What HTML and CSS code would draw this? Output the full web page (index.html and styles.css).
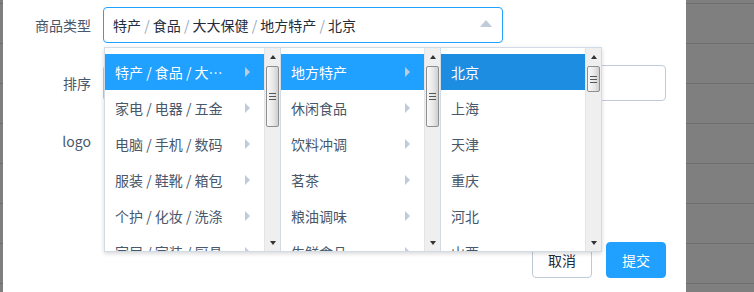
FILE: index.html
```html
<!DOCTYPE html>
<html lang="zh-CN">
<head>
<meta charset="UTF-8">
<meta name="viewport" content="width=device-width, initial-scale=1.0">
<title>编辑商品</title>
<link rel="stylesheet" href="styles.css">
</head>
<body>
<div class="dialog">
  <div class="dialog-body">
    <form class="form">
      <!-- 商品类型 -->
      <div class="form-item">
        <label class="form-label">商品类型</label>
        <div class="form-content">
          <div class="cascader">
            <span class="cascader-label">特产 <i>/</i> 食品 <i>/</i> 大大保健 <i>/</i> 地方特产 <i>/</i> 北京</span>
            <span class="cascader-caret"></span>
          </div>
          <!-- 级联菜单 -->
          <div class="cascader-menus">
            <div class="menu menu-first">
              <ul class="menu-list">
                <li class="menu-item active"><span class="item-text">特产 / 食品 / 大大保健</span><span class="item-arrow"></span></li>
                <li class="menu-item"><span class="item-text">家电 / 电器 / 五金</span><span class="item-arrow"></span></li>
                <li class="menu-item"><span class="item-text">电脑 / 手机 / 数码</span><span class="item-arrow"></span></li>
                <li class="menu-item"><span class="item-text">服装 / 鞋靴 / 箱包</span><span class="item-arrow"></span></li>
                <li class="menu-item"><span class="item-text">个护 / 化妆 / 洗涤</span><span class="item-arrow"></span></li>
                <li class="menu-item"><span class="item-text">家居 / 家装 / 厨具</span><span class="item-arrow"></span></li>
              </ul>
              <div class="scrollbar">
                <span class="sb-up"></span>
                <span class="sb-thumb sb-thumb-tall"></span>
                <span class="sb-down"></span>
              </div>
            </div>
            <div class="menu">
              <ul class="menu-list">
                <li class="menu-item active"><span class="item-text">地方特产</span><span class="item-arrow"></span></li>
                <li class="menu-item"><span class="item-text">休闲食品</span><span class="item-arrow"></span></li>
                <li class="menu-item"><span class="item-text">饮料冲调</span><span class="item-arrow"></span></li>
                <li class="menu-item"><span class="item-text">茗茶</span><span class="item-arrow"></span></li>
                <li class="menu-item"><span class="item-text">粮油调味</span><span class="item-arrow"></span></li>
                <li class="menu-item"><span class="item-text">生鲜食品</span><span class="item-arrow"></span></li>
              </ul>
              <div class="scrollbar">
                <span class="sb-up"></span>
                <span class="sb-thumb sb-thumb-tall"></span>
                <span class="sb-down"></span>
              </div>
            </div>
            <div class="menu menu-last">
              <ul class="menu-list">
                <li class="menu-item hover"><span class="item-text">北京</span></li>
                <li class="menu-item"><span class="item-text">上海</span></li>
                <li class="menu-item"><span class="item-text">天津</span></li>
                <li class="menu-item"><span class="item-text">重庆</span></li>
                <li class="menu-item"><span class="item-text">河北</span></li>
                <li class="menu-item"><span class="item-text">山西</span></li>
              </ul>
              <div class="scrollbar">
                <span class="sb-up"></span>
                <span class="sb-thumb sb-thumb-short"></span>
                <span class="sb-down"></span>
              </div>
            </div>
          </div>
        </div>
      </div>
      <!-- 排序 -->
      <div class="form-item">
        <label class="form-label">排序</label>
        <div class="form-content">
          <input class="input" type="text">
        </div>
      </div>
      <!-- logo -->
      <div class="form-item">
        <label class="form-label">logo</label>
        <div class="form-content"></div>
      </div>
    </form>
  </div>
  <div class="dialog-footer">
    <button class="btn" type="button">取消</button>
    <button class="btn btn-primary" type="button">提交</button>
  </div>
</div>
</body>
</html>
```

FILE: styles.css
```css
/* 遮罩下的表格 */
body {
  margin: 0;
  padding-left: 3px;
  height: 100vh;
  overflow: hidden;
  background: repeating-linear-gradient(to bottom, #6e6e6e 0 1px, #7f7f7f 1px 40px);
  background-position: 0 3px;
  font-family: "Noto Sans CJK SC", "Noto Sans", sans-serif;
  font-size: 14px;
  color: #48576a;
}
.dialog {
  width: 683px;
  height: 100vh;
  background: #fff;
  display: flex;
  flex-direction: column;
}
.dialog-body {
  padding: 7px 20px 0;
}
.form {
  margin: 0;
}
.form-item {
  display: flex;
  margin-bottom: 22px;
}
.form-label {
  width: 80px;
  flex-shrink: 0;
  box-sizing: border-box;
  padding-right: 12px;
  text-align: right;
  line-height: 36px;
}
.form-content {
  flex: 1;
  height: 36px;
  position: relative;
}

/* 级联选择器 */
.cascader {
  width: 400px;
  height: 36px;
  box-sizing: border-box;
  border: 1px solid #20a0ff;
  border-radius: 4px;
  display: flex;
  align-items: center;
  padding: 0 10px 0 9px;
}
.cascader-label {
  flex: 1;
  color: #1f2d3d;
  line-height: 20px;
  white-space: nowrap;
}
.cascader-label i {
  font-style: normal;
  color: #97a8be;
}
.cascader-caret {
  width: 0;
  height: 0;
  border-left: 6.5px solid transparent;
  border-right: 6.5px solid transparent;
  border-bottom: 7px solid #bfcbd9;
  margin-top: -4px;
}
.input {
  display: block;
  width: 100%;
  height: 36px;
  box-sizing: border-box;
  border: 1px solid #bfcbd9;
  border-radius: 4px;
  margin: 0;
}

.cascader-menus {
  position: absolute;
  top: 40px;
  left: 1px;
  z-index: 10;
  display: flex;
  background: #fff;
  border: 1px solid #d1dbe5;
  box-shadow: 0 2px 4px rgba(0, 0, 0, .12), 0 0 6px rgba(0, 0, 0, .04);
}
.menu {
  display: flex;
  height: 203px;
  border-right: 1px solid #d1dbe5;
}
.menu-last {
  border-right: none;
}
.menu-list {
  list-style: none;
  margin: 0;
  padding: 6px 0;
  width: 143px;
  overflow: hidden;
}
.menu-first .menu-list {
  width: 159px;
}
.menu-last .menu-list {
  width: 144px;
}
.menu-item {
  display: flex;
  align-items: center;
  padding: 8px 14px 8px 10px;
  line-height: 20px;
  white-space: nowrap;
}
.item-text {
  flex: 1;
  min-width: 0;
  overflow: hidden;
  text-overflow: ellipsis;
  margin-right: 18px;
}
.item-arrow {
  width: 0;
  height: 0;
  border-top: 5px solid transparent;
  border-bottom: 5px solid transparent;
  border-left: 5px solid #bfcbd9;
}
.menu-item.active {
  background: #20a0ff;
  color: #fff;
}
.menu-item.hover {
  background: #1c8de0;
  color: #fff;
}

/* 旧式滚动条 */
.scrollbar {
  width: 16px;
  box-sizing: border-box;
  background: #efefef;
  border-left: 1px solid #e4e4e4;
  display: flex;
  flex-direction: column;
  align-items: center;
}
.sb-up,
.sb-down {
  flex-shrink: 0;
  height: 17px;
  width: 100%;
  display: flex;
  align-items: center;
  justify-content: center;
}
.sb-up::before,
.sb-down::before {
  content: "";
  width: 0;
  height: 0;
  border-left: 3.5px solid transparent;
  border-right: 3.5px solid transparent;
}
.sb-up::before {
  border-bottom: 4px solid #333;
}
.sb-down::before {
  border-top: 4px solid #333;
}
.sb-down {
  margin-top: auto;
}
.sb-thumb {
  width: 13px;
  box-sizing: border-box;
  margin-top: 1px;
  border: 1px solid #8f8f8f;
  border-radius: 2px;
  background: linear-gradient(to right, #fafafa, #e6e6e6 60%, #cfcfcf);
  display: flex;
  align-items: center;
  justify-content: center;
}
.sb-thumb::after {
  content: "";
  width: 7px;
  height: 7px;
  background: repeating-linear-gradient(to bottom, #555 0 1px, transparent 1px 3px);
}
.sb-thumb-tall {
  height: 61px;
}
.sb-thumb-short {
  height: 26px;
}

/* 底部按钮 */
.dialog-footer {
  margin-top: auto;
  padding: 0 20px 14px;
  display: flex;
  justify-content: flex-end;
  gap: 14px;
}
.btn {
  width: 60px;
  height: 36px;
  border: 1px solid #bfcbd9;
  border-radius: 4px;
  background: #fff;
  color: #1f2d3d;
  font-family: inherit;
  font-size: 14px;
  padding: 0;
  cursor: pointer;
}
.btn-primary {
  background: #20a0ff;
  border-color: #20a0ff;
  color: #fff;
}
```
